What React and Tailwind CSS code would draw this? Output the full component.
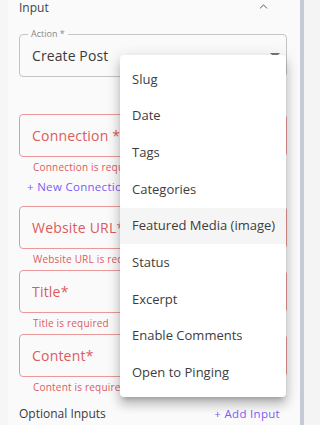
import { ChevronUp } from "lucide-react";

const menuItems = [
  "Slug",
  "Date",
  "Tags",
  "Categories",
  "Featured Media (image)",
  "Status",
  "Excerpt",
  "Enable Comments",
  "Open to Pinging",
];

function ErrorField({ label, error, className = "" }) {
  return (
    <div className={className}>
      <div className="h-[43px] rounded-[4px] border border-[#e89a9a] flex items-center pl-[12px]">
        <span className="text-[14px] text-[#dc5b5e] tracking-[0.2px]">{label}</span>
      </div>
      <div className="pl-[14px] mt-[3px] text-[10px] leading-[14px] text-[#dc5b5e] tracking-[0.2px] whitespace-nowrap">
        {error}
      </div>
    </div>
  );
}

export default function App() {
  return (
    <div
      className="relative w-[320px] h-[425px] overflow-hidden flex bg-[#f4f4f4]"
      style={{ fontFamily: '"Open Sans", "Liberation Sans", sans-serif' }}
    >
      <div className="w-[8px] bg-[#f6f6f6]" />
      <div className="w-[292px] bg-[#fafafa] pl-[11px] pr-[13px] flex flex-col">
        <div className="h-[15px] flex items-center justify-between">
          <span className="text-[12px] text-[#444]">Input</span>
          <ChevronUp size={13} strokeWidth={1.8} className="text-[#555] mr-[17px] -mt-[2px]" />
        </div>

        <div className="relative mt-[19px] h-[43px] rounded-[4px] border border-[#c4c4c4] flex items-center pl-[12px]">
          <span className="absolute -top-[7px] left-[8px] px-[3px] bg-[#fafafa] text-[9px] leading-[12px] text-[#888]">
            Action *
          </span>
          <span className="text-[14px] text-[#3a3a3a] tracking-[0.1px]">Create Post</span>
          <svg className="absolute right-[6px] top-[18px]" width="10" height="5" viewBox="0 0 10 5">
            <path d="M0 0 L10 0 L5 5 Z" fill="#777" />
          </svg>
        </div>

        <ErrorField className="mt-[37px]" label="Connection *" error="Connection is required" />
        <div className="mt-[6px] pl-[8px] text-[11.5px] leading-[14px] text-[#7a5cf5] tracking-[0.3px]">
          + New Connection
        </div>

        <ErrorField className="mt-[12px]" label="Website URL*" error="Website URL is required" />
        <ErrorField className="mt-[4px]" label="Title*" error="Title is required" />
        <ErrorField className="mt-[4px]" label="Content*" error="Content is required" />

        <div className="mt-[11px] flex items-center justify-between">
          <span className="text-[12px] text-[#3a3a3a]">Optional Inputs</span>
          <span className="text-[11.5px] text-[#7a5cf5] mr-[7px] tracking-[0.3px]">+ Add Input</span>
        </div>
      </div>
      <div className="w-[4px] bg-[#c5cbd6]" />
      <div className="flex-1 bg-[#f4f4f4]" />

      <div className="absolute left-[120px] top-[55px] w-[166px] bg-white rounded-[4px] py-[6px] shadow-[0_5px_5px_-3px_rgba(0,0,0,0.2),0_8px_10px_1px_rgba(0,0,0,0.14),0_3px_14px_2px_rgba(0,0,0,0.12)]">
        {menuItems.map((item) => (
          <div
            key={item}
            className={`h-[36.7px] flex items-center pl-[12px] text-[13px] text-[#3d3d3d] ${
              item === "Featured Media (image)" ? "bg-[#f5f5f5]" : ""
            }`}
          >
            {item}
          </div>
        ))}
      </div>
    </div>
  );
}
